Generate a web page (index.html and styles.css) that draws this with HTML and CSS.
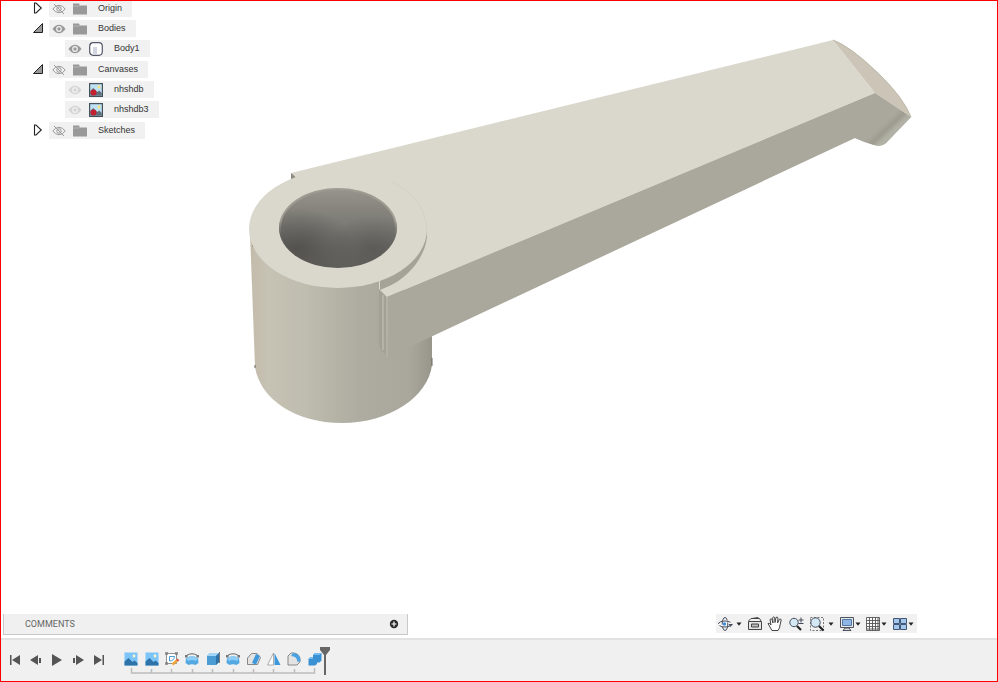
FILE: index.html
```
<!DOCTYPE html>
<html lang="en">

<head>
    <meta charset="UTF-8">
    <meta name="viewport" content="width=device-width, initial-scale=1.0">
    <title>Design</title>
    <link rel="stylesheet" href="styles.css">
</head>

<body>
    <!-- Shared icons -->
    <svg class="sprite" aria-hidden="true">
        <symbol id="closed" viewBox="0 0 12 14">
            <path d="M2.5 2v10h1.5L9.3 7 4 2z" fill="#fff" stroke="#222" stroke-width="1.1" />
        </symbol>
        <symbol id="open" viewBox="0 0 12 14">
            <path d="M10.5 2.5v9H1.5z" fill="#999" stroke="#222" />
        </symbol>
        <symbol id="eye" viewBox="0 0 14 10">
            <path d="M.5 5Q3.5.8 7 .8T13.5 5Q10.500 9.200 7 9.200T.5 5z" fill="currentColor" />
            <circle cx="7" cy="5" r="2.900" fill="#f1f1f1" />
            <circle cx="7" cy="5" r="1.700" fill="currentColor" />
        </symbol>
        <symbol id="eye-off" viewBox="0 0 14 10">
            <path d="M.8 5Q3.500 1.300 7 1.300T13.200 5Q10.500 8.700 7 8.700T.8 5zM2 0l10 10" fill="none" stroke="#999" />
            <circle cx="7" cy="5" r="2.200" fill="none" stroke="#999" />
        </symbol>
        <symbol id="folder" viewBox="0 0 14 12">
            <path d="M0 .5h6l1 2h7v9H0z" fill="#999" />
            <path d="M0 3h6l1-1" fill="none" stroke="#c4c4c4" stroke-width=".7" />
        </symbol>
        <symbol id="body" viewBox="0 0 14 14">
            <rect x=".7" y=".7" width="12.600" height="12.600" rx="3.500" fill="#fff" stroke="#54586a" stroke-width="1.200" />
            <path d="M4 5h4v7H4z" fill="#d3d7e2" />
        </symbol>
        <symbol id="canvas" viewBox="0 0 14 14">
            <rect x=".6" y=".6" width="12.800" height="12.800" fill="#bfe2f2" stroke="#47515c" stroke-width="1.200" />
            <circle cx="10" cy="4" r="1.400" fill="#f7e27c" />
            <path d="M1.200 8l3-3 4 4 2-1.500 2.600 2.500v2.800H1.200z" fill="#60717d" />
            <circle cx="4.500" cy="9.500" r="3" fill="#c4202f" />
        </symbol>
        <symbol id="image" viewBox="0 0 14 14">
            <path d="M.5.5h13v13H.5z" fill="#7cc5f8" />
            <path d="M.5 9.500l4-3.500 4 4 2-1.500 3 2.500v2.500H.5z" fill="#2d72a8" />
            <circle cx="10" cy="4" r="1.400" fill="#fff6c9" />
        </symbol>
        <symbol id="revolve" viewBox="0 0 14 14">
            <path d="M1 6Q7 2.500 13 6l.5 5-3 2Q7 11.500 3.500 13l-3-2z" fill="#55a9e3" />
            <path d="M1 6Q7 2.500 13 6L11 9Q7 7 3 9z" fill="#8dcdf6" />
            <path d="M1.500 3.500Q7 0 12.500 3.500" fill="none" stroke="#666" />
            <path d="M0 3h2.500v2.500H0zM11.500 3H14v2.500h-2.500z" fill="#777" />
        </symbol>
        <symbol id="down" viewBox="0 0 6 6">
            <path d="M.5 1.500h5L3 4.800z" fill="#222" />
        </symbol>
    </svg>

    <div class="app">
        <main class="stage">
            <svg class="model" viewBox="1 1 996 613" preserveAspectRatio="xMinYMin meet" role="img" aria-label="Lever arm model">
                <defs>
                    <linearGradient id="barrel">
                        <stop offset="0" stop-color="#c4bbaa" />
                        <stop offset=".1" stop-color="#c6c2b4" />
                        <stop offset=".3" stop-color="#bfbdaf" />
                        <stop offset=".6" stop-color="#aeaca0" />
                        <stop offset=".88" stop-color="#a9a79b" />
                        <stop offset="1" stop-color="#98968a" />
                    </linearGradient>
                    <linearGradient id="bore" x2="0" y2="1">
                        <stop offset="0" stop-color="#97958c" />
                        <stop offset=".25" stop-color="#87857e" />
                        <stop offset=".6" stop-color="#757470" />
                        <stop offset="1" stop-color="#62615d" />
                    </linearGradient>
                    <radialGradient id="boreShade" cx=".15" cy=".75" r=".5">
                        <stop offset="0" stop-color="#4a4946" stop-opacity=".75" />
                        <stop offset="1" stop-color="#4a4946" stop-opacity="0" />
                    </radialGradient>
                    <radialGradient id="boreShadeRight" cx=".8" cy=".75" r=".4">
                        <stop offset="0" stop-color="#4a4946" stop-opacity=".5" />
                        <stop offset="1" stop-color="#4a4946" stop-opacity="0" />
                    </radialGradient>
                    <linearGradient id="boreRim" x2="0" y2="1">
                        <stop offset="0" stop-color="#a9a79c" stop-opacity=".4" />
                        <stop offset=".4" stop-color="#b0aea2" stop-opacity=".7" />
                        <stop offset=".6" stop-color="#8b8980" stop-opacity="0" />
                    </linearGradient>
                    <linearGradient id="tip" x1="0" y1="0" x2="1" y2="1">
                        <stop offset=".55" stop-color="#aaa89c" />
                        <stop offset=".63" stop-color="#9d9b90" />
                        <stop offset=".7" stop-color="#b2b1a5" />
                    </linearGradient>
                </defs>
                <!-- Barrel -->
                <path d="M250 232L255 367C260 399 295 423 342 423S428 397 432 365V300z" fill="url(#barrel)" />
                <path d="M253 244v3M255 365v3M432 358v8" stroke="#67665f" />
                <!-- Arm -->
                <path d="M291 173L833 40 875 93 387 297 379 289V270L291 190z" fill="#dad8cc" />
                <path d="M387 297L875 93 911 117 886 143Q882 147 874 145 865 143 855 138L388 357z" fill="#aaa89c" />
                <path d="M875 93L911 117 886 143Q882 147 874 145L855 138z" fill="url(#tip)" />
                <path d="M833 40Q850 46 878 73 903 97 911 117L875 93z" fill="#cbc4b7" />
                <path d="M833 40Q850 46 878 73 903 97 911 117" fill="none" stroke="#bcb9a9" />
                <path d="M379 289L387 297 388 357 381 350Q379 347 379 342z" fill="#a3a195" />
                <path d="M383 295v55" stroke="#b5b3a7" stroke-width="2" />
                <path d="M379 289l8 8v60" fill="none" stroke="#c2c0b3" />
                <path d="M291 173v10l7-4z" fill="#8d8b80" />
                <path d="M293 174h12l-8 5z" fill="#dad8cc" />
                <!-- Collar and bore -->
                <path d="M427 225v12C425 258 407 279 387 287L380 290V276z" fill="#a5a397" />
                <ellipse cx="338" cy="229" rx="89" ry="59" fill="#dad8cc" />
                <path d="M391 181Q425 199 427 229" fill="none" stroke="#d3d1c4" />
                <ellipse cx="338" cy="228" rx="59" ry="40" fill="url(#bore)" />
                <ellipse cx="338" cy="228" rx="59" ry="40" fill="url(#boreShade)" />
                <ellipse cx="338" cy="228" rx="59" ry="40" fill="url(#boreShadeRight)" />
                <ellipse cx="338" cy="228" rx="58" ry="39" fill="none" stroke="url(#boreRim)" stroke-width="2" />
            </svg>

            <ul class="tree">
                <li class="node">
                    <button class="toggle" aria-label="Expand Origin"><svg><use href="#closed" /></svg></button>
                    <span class="row"><svg class="eye"><use href="#eye-off" /></svg><svg class="folder"><use href="#folder" /></svg>Origin</span>
                </li>
                <li class="node">
                    <button class="toggle" aria-label="Collapse Bodies"><svg><use href="#open" /></svg></button>
                    <span class="row"><svg class="eye"><use href="#eye" /></svg><svg class="folder"><use href="#folder" /></svg>Bodies</span>
                    <ul class="children">
                        <li class="row"><svg class="eye"><use href="#eye" /></svg><svg class="kind"><use href="#body" /></svg>Body1</li>
                    </ul>
                </li>
                <li class="node">
                    <button class="toggle" aria-label="Collapse Canvases"><svg><use href="#open" /></svg></button>
                    <span class="row"><svg class="eye"><use href="#eye-off" /></svg><svg class="folder"><use href="#folder" /></svg>Canvases</span>
                    <ul class="children">
                        <li class="row"><svg class="eye dim"><use href="#eye" /></svg><svg class="kind"><use href="#canvas" /></svg>nhshdb</li>
                        <li class="row"><svg class="eye dim"><use href="#eye" /></svg><svg class="kind"><use href="#canvas" /></svg>nhshdb3</li>
                    </ul>
                </li>
                <li class="node">
                    <button class="toggle" aria-label="Expand Sketches"><svg><use href="#closed" /></svg></button>
                    <span class="row"><svg class="eye"><use href="#eye-off" /></svg><svg class="folder"><use href="#folder" /></svg>Sketches</span>
                </li>
            </ul>
        </main>

        <div class="dock">
            <section class="comments">
                <span>COMMENTS</span>
                <button aria-label="Add comment">
                    <svg viewBox="0 0 10 10"><circle cx="5" cy="5" r="4.200" fill="#2b2b2b" /><path d="M5 2.500v5M2.500 5h5" stroke="#fff" stroke-width="1.200" /></svg>
                </button>
            </section>

            <nav class="view-tools" aria-label="View">
                <button class="wide" aria-label="Orbit">
                    <svg class="tool" viewBox="0 0 16 16" fill="none" stroke="#444d5b"><ellipse cx="8" cy="8" rx="6.500" ry="3" fill="#fff" stroke-dasharray="13 2" /><ellipse cx="8" cy="8" rx="2.800" ry="6.500" stroke-dasharray="12 2" /><path d="M11.500 8H16l-2.500 3z" fill="#444d5b" stroke="none" /><circle cx="7.500" cy="8" r="1.700" fill="#3e8ede" stroke="none" /></svg>
                    <svg class="down"><use href="#down" /></svg>
                </button>
                <button aria-label="Look at">
                    <svg class="tool" viewBox="0 0 16 16" fill="none" stroke="#444"><path d="M1.500 5.500h13v8h-13z" fill="#e5e5e5" /><path d="M4.500 8h7v3h-7z" fill="#bbb" /><path d="M1.500 5L4 2.500h8.500L14 5M5 2.500l6-1 1 1.500" /></svg>
                </button>
                <button aria-label="Pan">
                    <svg class="tool" viewBox="0 0 16 16" fill="#fff" stroke="#444" stroke-linejoin="round"><path d="M5 14.500C4 12 2 10 1 7.500q1.500-1 3 1.500L3 3.500q1-1.500 2 0l1 3.500-.3-5.500q1-1.300 2 0L8 6.500 9 1.500q1.300-1 2 .3L10.500 7l2-3.800q1.500-.7 1.700.8L13 9q0 3-2 5.500z" /></svg>
                </button>
                <button aria-label="Zoom">
                    <svg class="tool" viewBox="0 0 16 16" fill="none" stroke="#444d5b"><circle cx="6" cy="6.500" r="4.200" fill="#d5e9f4" /><path d="M9 10l4 4" stroke="#222" stroke-width="2.200" /><path d="M13 1.500v5M10.500 4h5M10.500 7.500h5" /></svg>
                </button>
                <button class="wide" aria-label="Fit">
                    <svg class="tool" viewBox="0 0 16 16" fill="none" stroke="#444d5b"><path d="M1.500 1.500h13v13h-13z" stroke-dasharray="2 1.500" stroke="#777" /><circle cx="6.500" cy="6.500" r="4.700" fill="#d5e9f4" /><path d="M10 10l4.500 4.500" stroke="#222" stroke-width="2.200" /></svg>
                    <svg class="down"><use href="#down" /></svg>
                </button>
                <button aria-label="Display settings">
                    <svg class="tool" viewBox="0 0 16 16" stroke="#4d535e"><path d="M1.500 1.500h13v10h-13z" fill="#e8e8e8" /><path d="M3.500 3.500h9v6h-9z" fill="#8fb7e5" stroke="#5278a8" /><path d="M6 12h4l2 2.500H4z" fill="#ddd" /></svg>
                    <svg class="down"><use href="#down" /></svg>
                </button>
                <button aria-label="Grid and snaps">
                    <svg class="tool" viewBox="0 0 16 16" fill="#fff" stroke="#555"><path d="M1.500 1.500h13v13h-13zM4.500 1.500v13M7.500 1.500v13M10.500 1.500v13M13 1.500v13M1.500 4.500h13M1.500 7.500h13M1.500 10.500h13M1.500 13h13" stroke-width=".9" /></svg>
                    <svg class="down"><use href="#down" /></svg>
                </button>
                <button aria-label="Viewports">
                    <svg class="tool" viewBox="0 0 16 16" fill="#a5c6ed" stroke="#3f5878"><path d="M1.500 2.500h6v5h-6zM8.500 2.500h6v5h-6zM1.500 8.500h6v5h-6zM8.500 8.500h6v5h-6z" /></svg>
                    <svg class="down"><use href="#down" /></svg>
                </button>
            </nav>
        </div>

        <footer class="timeline">
            <div class="transport">
                <button aria-label="Go to start"><svg viewBox="0 0 14 14"><path d="M2 2h1.500v10H2zM12 2v10L4 7z" /></svg></button>
                <button aria-label="Step back"><svg viewBox="0 0 14 14"><path d="M9 2v10L1 7zM10 5h2v5h-2z" /></svg></button>
                <button aria-label="Play"><svg viewBox="0 0 14 14"><path d="M2 1v12l10-6z" /></svg></button>
                <button aria-label="Step forward"><svg viewBox="0 0 14 14"><path d="M5 2v10l8-5zM2 5h2v5H2z" /></svg></button>
                <button aria-label="Go to end"><svg viewBox="0 0 14 14"><path d="M2 2v10l8-5zM10.500 2H12v10h-1.500z" /></svg></button>
            </div>
            <div class="history">
                <ol class="features">
                    <li><svg><use href="#image" /></svg></li>
                    <li><svg><use href="#image" /></svg></li>
                    <li><svg viewBox="0 0 14 14" fill="none" stroke="#777"><path d="M1.500 1.500h10v10h-10z" fill="#fff" stroke-width=".8" /><path d="M4.500 4.500h5Q9 9 4.500 9z" stroke="#4b9bd5" /><path d="M0 0h3v3H0zM10 0h3v3h-3zM0 10h3v3H0z" fill="#777" stroke="none" opacity=".7" /><path d="M7.500 12.500l5-4.500" stroke="#f0a53a" stroke-width="2.500" /><path d="M12 8.500l1.300-1.200" stroke="#dc514b" stroke-width="2.500" /></svg></li>
                    <li><svg><use href="#revolve" /></svg></li>
                    <li><svg viewBox="0 0 14 14"><path d="M1 4l3-3h9v9l-3 3H1z" fill="#4b9bd5" /><path d="M1 4l3-3h9l-3 3z" fill="#a3d6f7" /><path d="M10 4l3-3v9l-3 3z" fill="#2d72a8" /><path d="M13.500 0v11" stroke="#777" /></svg></li>
                    <li><svg><use href="#revolve" /></svg></li>
                    <li><svg viewBox="0 0 14 14"><path d="M.5 6l4-4.500H10l3.500 4-3 7H.5z" fill="#e3e3e3" stroke="#888" /><path d="M5 11l4-9 4 2-4 8.500z" fill="#3d98dc" /></svg></li>
                    <li><svg viewBox="0 0 14 14"><path d="M6.500 1v12H.5z" fill="#fff" stroke="#999" stroke-width=".8" /><path d="M7.500 1l6 12h-6z" fill="#3d98dc" /></svg></li>
                    <li><svg viewBox="0 0 14 14"><path d="M1 13V4l3-3h3q6 1 6 7v2l-3 3z" fill="#e3e3e3" stroke="#888" /><path d="M6 1q7 0 7.500 8l-3 1Q10 4 4 4z" fill="#4ba3e3" /></svg></li>
                    <li><svg viewBox="0 0 14 14"><path d="M5 3l2-2h6.500v7.500l-2 2H9V12l-2 1.500H.5V7l2-2H5z" fill="#3990d3" /><path d="M5 3l2-2h6.500l-2 2zM.5 7l2-2H5v2z" fill="#75bcf0" /></svg></li>
                </ol>
                <svg class="ruler" viewBox="0 0 204 6" fill="none" stroke="#bcbcbc" stroke-width="1.500">
                    <path d="M10.500 0v5h183V0M30.500 1v4M50.500 1v4M71.500 1v4M91.500 1v4M112.500 1v4M132.500 1v4M152.500 1v4M173.500 1v4" />
                </svg>
            </div>
            <svg class="playhead" viewBox="0 0 12 28"><path d="M1 0h10v3L7 8v20H5V8L1 3z" fill="#666" /></svg>
        </footer>
    </div>
</body>

</html>
```

FILE: styles.css
```
* {
    box-sizing: border-box;
}

body {
    margin: 0;
    font-family: "Liberation Sans", Arial, sans-serif;
    font-size: 9px;
    color: #333;
    background: #fff;
}

svg {
    display: block;
    flex: none;
}

button {
    display: flex;
    align-items: center;
    justify-content: center;
    padding: 0;
    border: none;
    background: none;
    cursor: pointer;
}

ul,
ol {
    list-style: none;
    margin: 0;
    padding: 0;
}

.sprite {
    position: absolute;
    width: 0;
    height: 0;
}

.app {
    display: flex;
    flex-direction: column;
    height: 100vh;
    border: 1px solid #f00;
}

/* Model and browser tree share one cell */
.stage {
    display: grid;
    flex: 1;
    min-height: 0;
    overflow: hidden;
}

.model,
.tree {
    grid-area: 1 / 1;
}

.model {
    width: 100%;
}

.tree {
    display: flex;
    flex-direction: column;
    gap: 3px;
    align-self: start;
    justify-self: start;
    margin: -1px 0 0 31px;
}

.node {
    display: grid;
    grid-template-columns: 12px auto;
    column-gap: 5px;
    justify-items: start;
}

.toggle,
.toggle svg {
    width: 12px;
    height: 16px;
}

.row {
    display: flex;
    align-items: center;
    height: 17px;
    padding: 0 10px 0 3px;
    background: #f1f1f1;
    line-height: 17px;
}

.children {
    display: flex;
    flex-direction: column;
    grid-column: 2;
    gap: 3px;
    align-items: flex-start;
    padding: 3px 0 1px 16px;
}

.eye {
    width: 14px;
    height: 10px;
    margin-right: 7px;
    color: #999;
}

.dim {
    color: #d5d5d5;
}

.folder {
    width: 14px;
    height: 12px;
    margin-right: 11px;
}

.kind {
    width: 14px;
    height: 14px;
    margin-right: 11px;
}

.dock {
    display: flex;
    justify-content: space-between;
    align-items: flex-start;
    padding: 0 80px 3px 2px;
}

.comments {
    display: flex;
    align-items: center;
    justify-content: space-between;
    width: 405px;
    height: 21px;
    padding: 0 8px 0 21px;
    border: 1px solid #c8c8c8;
    border-top: none;
    background: #f0f0f0;
    font-family: Roboto, sans-serif;
    color: #666;
}

.comments svg {
    width: 10px;
    height: 10px;
}

.view-tools {
    display: flex;
    align-items: center;
    justify-content: space-between;
    width: 201px;
    height: 19px;
    padding: 0 3px 0 1px;
    background: #f1f1f1;
}

.wide {
    gap: 3px;
}

.tool {
    width: 16px;
    height: 16px;
}

.down {
    width: 6px;
    height: 6px;
}

.timeline {
    display: flex;
    align-items: flex-start;
    height: 43px;
    padding-left: 3px;
    border-top: 2px solid #e2e2e2;
    background: #f0f0f0;
}

.transport {
    display: flex;
    margin: 12px 12px 0 0;
}

.transport button {
    width: 21px;
    height: 16px;
}

.transport svg {
    width: 14px;
    height: 14px;
    fill: #555;
}

.history {
    width: 204px;
    padding-top: 12px;
}

.features {
    display: grid;
    grid-template-columns: repeat(10, 1fr);
    justify-items: center;
}

.features svg {
    width: 14px;
    height: 14px;
}

.ruler {
    width: 204px;
    height: 6px;
    margin-top: 2px;
}

.playhead {
    width: 12px;
    height: 28px;
    margin: 7px 0 0 -6px;
}
```
